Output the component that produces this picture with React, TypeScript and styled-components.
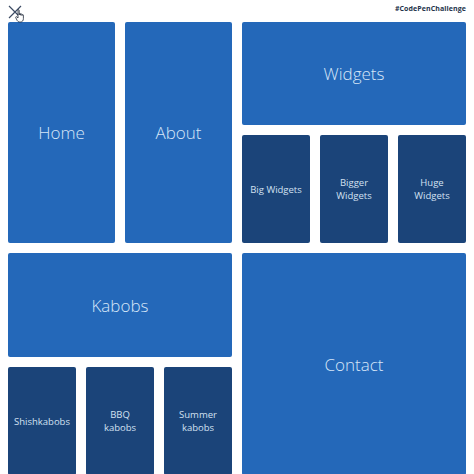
import styled, { createGlobalStyle } from 'styled-components';

const GlobalStyle = createGlobalStyle`
  html, body {
    margin: 0;
    padding: 0;
    background: #ffffff;
    font-family: "Open Sans", "Liberation Sans", sans-serif;
    overflow: hidden;
  }
`;

type Tile = { label: string[] };

const smallWidgets: Tile[] = [
  { label: ['Big Widgets'] },
  { label: ['Bigger', 'Widgets'] },
  { label: ['Huge', 'Widgets'] },
];

const smallKabobs: Tile[] = [
  { label: ['Shishkabobs'] },
  { label: ['BBQ', 'kabobs'] },
  { label: ['Summer', 'kabobs'] },
];

export default function App() {
  return (
    <Page>
      <GlobalStyle />
      <Header>
        <CloseButton aria-label="close">
          <svg width="14" height="14" viewBox="0 0 14 14">
            <path d="M1 1 L13 13 M13 1 L1 13" stroke="#3b4a63" strokeWidth="1.2" fill="none" />
          </svg>
          <Cursor width="11" height="14" viewBox="0 0 11 14">
            <path
              d="M3 1.2 C3 0.5 4.2 0.5 4.2 1.2 L4.2 6 L4.4 4.8 C4.5 4.2 5.6 4.2 5.6 4.9 L5.6 6.2 L5.8 5.3 C5.9 4.8 7 4.8 7 5.4 L7 6.6 L7.2 6 C7.3 5.5 8.4 5.5 8.4 6.2 L8.4 9.5 C8.4 11.5 7.4 13 5.5 13 L4.6 13 C3.3 13 2.6 12.2 2 11.2 L0.7 8.6 C0.4 8 1.2 7.3 1.8 7.9 L3 9 Z"
              fill="#ffffff"
              stroke="#1f2a3a"
              strokeWidth="0.8"
              strokeLinejoin="round"
            />
          </Cursor>
        </CloseButton>
        <Tag>#CodePenChallenge</Tag>
      </Header>
      <Grid>
        <Section>
          <Pair>
            <Block>Home</Block>
            <Block>About</Block>
          </Pair>
        </Section>
        <Section>
          <Split>
            <Block>Widgets</Block>
            <Row>
              {smallWidgets.map((t) => (
                <SmallBlock key={t.label.join(' ')}>
                  {t.label.map((l) => (
                    <span key={l}>{l}</span>
                  ))}
                </SmallBlock>
              ))}
            </Row>
          </Split>
        </Section>
        <Section>
          <Split>
            <Block>Kabobs</Block>
            <Row>
              {smallKabobs.map((t) => (
                <SmallBlock key={t.label.join(' ')}>
                  {t.label.map((l) => (
                    <span key={l}>{l}</span>
                  ))}
                </SmallBlock>
              ))}
            </Row>
          </Split>
        </Section>
        <Section>
          <Block>Contact</Block>
        </Section>
      </Grid>
    </Page>
  );
}

const Page = styled.div`
  width: 474px;
  height: 474px;
  padding: 0 8px;
  box-sizing: border-box;
`;

const Header = styled.header`
  height: 22px;
  display: flex;
  justify-content: space-between;
  align-items: flex-start;
`;

const CloseButton = styled.div`
  position: relative;
  width: 14px;
  height: 14px;
  margin-top: 2px;
  margin-left: 0;
`;

const Cursor = styled.svg`
  position: absolute;
  left: 7px;
  top: 7px;
`;

const Tag = styled.span`
  margin-top: 4px;
  font-family: "Open Sans", "Liberation Sans", sans-serif;
  font-weight: 700;
  font-size: 7px;
  color: #23324a;
  letter-spacing: 0.1px;
`;

const Grid = styled.main`
  display: grid;
  grid-template-columns: 224px 224px;
  grid-template-rows: 221px 222px;
  gap: 10px;
`;

const Section = styled.section`
  display: flex;
`;

const Pair = styled.div`
  flex: 1;
  display: grid;
  grid-template-columns: 1fr 1fr;
  gap: 10px;
`;

const Split = styled.div`
  flex: 1;
  display: grid;
  grid-template-rows: 1fr 108px;
  gap: 10px;
`;

const Row = styled.div`
  display: grid;
  grid-template-columns: repeat(3, 1fr);
  gap: 10px;
`;

const Block = styled.div`
  flex: 1;
  display: flex;
  align-items: center;
  justify-content: center;
  background: #2468b9;
  border-radius: 2px;
  color: #d6e6f8;
  font-weight: 300;
  font-size: 17px;
`;

const SmallBlock = styled.div`
  display: flex;
  flex-direction: column;
  align-items: center;
  justify-content: center;
  background: #1b4479;
  border-radius: 2px;
  color: #d3e1f1;
  font-size: 9.5px;
  line-height: 13px;
  text-align: center;
`;
